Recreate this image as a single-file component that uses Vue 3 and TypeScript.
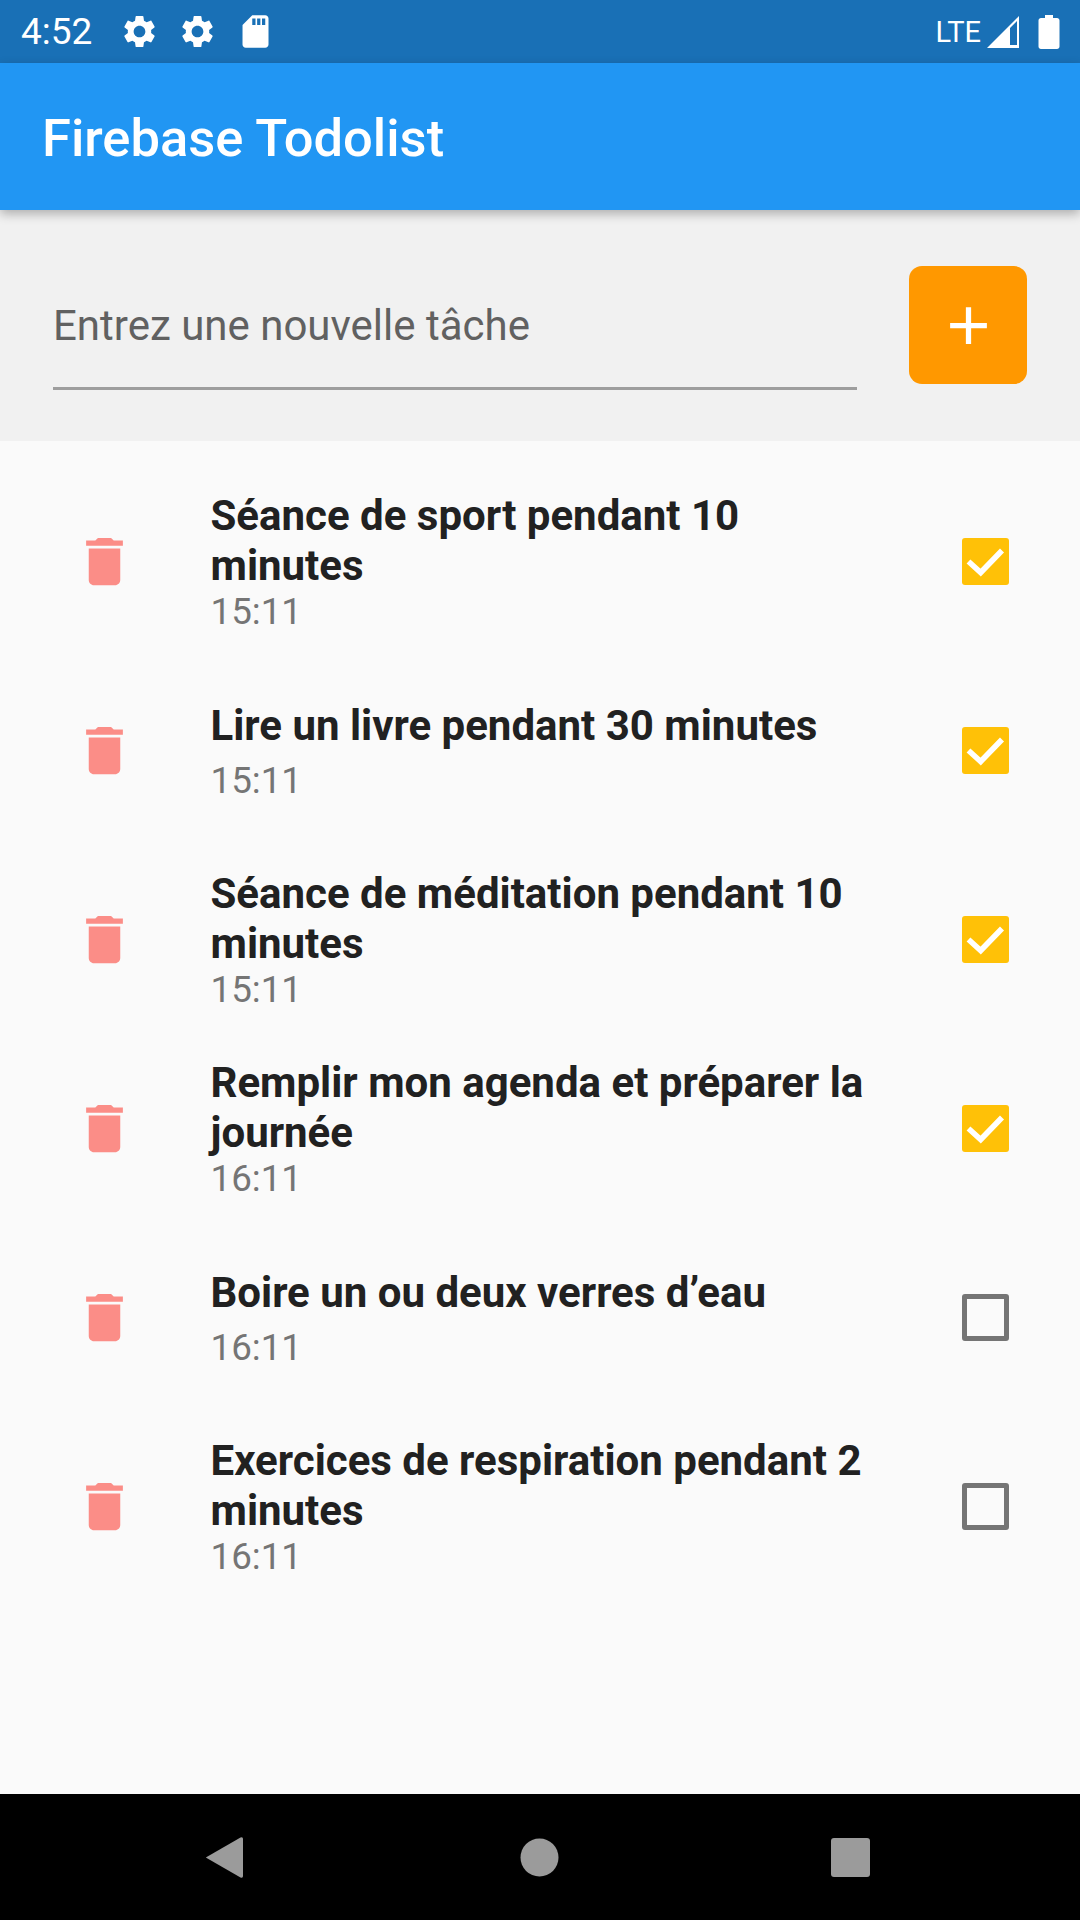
<script setup lang="ts">
interface Task { title: string; time: string; done: boolean; single?: boolean }
const tasks: Task[] = [
  { title: 'Séance de sport pendant 10 minutes', time: '15:11', done: true },
  { title: 'Lire un livre pendant 30 minutes', time: '15:11', done: true, single: true },
  { title: 'Séance de méditation pendant 10 minutes', time: '15:11', done: true },
  { title: 'Remplir mon agenda et préparer la journée', time: '16:11', done: true },
  { title: 'Boire un ou deux verres d’eau', time: '16:11', done: false, single: true },
  { title: 'Exercices de respiration pendant 2 minutes', time: '16:11', done: false },
]
const gear = 'M19.14 12.94c.04-.3.06-.61.06-.94 0-.32-.02-.64-.07-.94l2.03-1.58c.18-.14.23-.41.12-.61l-1.92-3.32c-.12-.22-.37-.29-.59-.22l-2.39.96c-.5-.38-1.03-.7-1.62-.94l-.36-2.54c-.04-.24-.24-.41-.48-.41h-3.84c-.24 0-.43.17-.47.41l-.36 2.54c-.59.24-1.13.57-1.62.94l-2.39-.96c-.22-.08-.47 0-.59.22L2.74 8.87c-.12.21-.08.47.12.61l2.03 1.58c-.05.3-.09.63-.09.94s.02.64.07.94l-2.03 1.58c-.18.14-.23.41-.12.61l1.92 3.32c.12.22.37.29.59.22l2.39-.96c.5.38 1.03.7 1.62.94l.36 2.54c.05.24.24.41.48.41h3.84c.24 0 .44-.17.47-.41l.36-2.54c.59-.24 1.13-.56 1.62-.94l2.39.96c.22.08.47 0 .59-.22l1.92-3.32c.12-.22.07-.47-.12-.61l-2.01-1.58zM12 15.6c-1.98 0-3.6-1.62-3.6-3.6s1.62-3.6 3.6-3.6 3.6 1.62 3.6 3.6-1.62 3.6-3.6 3.6z'
</script>

<template>
  <div class="screen">
    <div class="status">
      <span class="clock">4:52</span>
      <div class="status-icons">
        <svg class="s-icon" viewBox="0 0 24 24"><path :d="gear" fill="#fff" /></svg>
        <svg class="s-icon" viewBox="0 0 24 24"><path :d="gear" fill="#fff" /></svg>
        <svg class="s-icon" viewBox="0 0 24 24"><path fill="#fff" d="M18 2h-8L4.02 8 4 20c0 1.1.9 2 2 2h12c1.1 0 2-.9 2-2V4c0-1.1-.9-2-2-2zm-6 6h-2V4h2v4zm3 0h-2V4h2v4zm3 0h-2V4h2v4z" /></svg>
      </div>
      <div class="status-right">
        <span class="lte">LTE</span>
        <svg class="signal" width="34" height="34" viewBox="0 0 34 34"><path fill="#fff" fill-rule="evenodd" d="M33 1V33H1L33 1ZM24 13V30H31V6Z" /></svg>
        <svg class="battery" width="22" height="36" viewBox="0 0 22 36"><path fill="#fff" d="M7 1h8v3h4c1.4 0 2.5 1.100 2.500 2.500v26c0 1.400-1.100 2.500-2.500 2.500H3c-1.400 0-2.500-1.100-2.500-2.500v-26C.5 5.100 1.600 4 3 4h4z" /></svg>
      </div>
    </div>

    <header class="appbar">Firebase Todolist</header>

    <section class="entry">
      <div class="field">Entrez une nouvelle tâche</div>
      <div class="add">
        <svg width="63" height="63" viewBox="0 0 24 24"><path fill="#fff" d="M19 13h-6v6h-2v-6H5v-2h6V5h2v6h6v2z" /></svg>
      </div>
    </section>

    <main class="list">
      <div v-for="t in tasks" :key="t.title" class="row">
        <svg class="trash" width="63" height="63" viewBox="0 0 24 24"><path fill="#fb8d87" d="M6 19c0 1.100.9 2 2 2h8c1.100 0 2-.9 2-2V7H6v12zM19 4h-3.500l-1-1h-5l-1 1H5v2h14V4z" /></svg>
        <div class="text" :class="{ single: t.single }">
          <div class="title">{{ t.title }}</div>
          <div class="time">{{ t.time }}</div>
        </div>
        <div class="check" :class="{ on: t.done }">
          <svg v-if="t.done" width="47" height="47" viewBox="0 0 47 47"><path fill="none" stroke="#fff" stroke-width="5.600" d="M6.500 23.500L18.700 34.500L40 12.500" /></svg>
        </div>
      </div>
    </main>

    <nav class="navbar">
      <svg width="63" height="63" viewBox="0 0 63 63"><path fill="#9b9b9b" d="M12.800 31.500L47.500 11.500Q50 10.500 50 13V50Q50 52.500 47.500 51.500Z" /></svg>
      <svg width="63" height="63" viewBox="0 0 63 63"><circle cx="31.500" cy="31.500" r="19" fill="#9b9b9b" /></svg>
      <svg class="nav-recent" width="63" height="63" viewBox="0 0 63 63"><rect x="12" y="12" width="39" height="39" rx="3" fill="#9b9b9b" /></svg>
    </nav>
  </div>
</template>

<style>
html, body { margin: 0; padding: 0; }
</style>

<style scoped>
.screen {
  width: 1080px;
  height: 1920px;
  display: flex;
  flex-direction: column;
  background: #fafafa;
  font-family: Roboto, "Liberation Sans", sans-serif;
  overflow: hidden;
}
.status {
  height: 63px;
  flex: none;
  background: #1970b6;
  display: flex;
  align-items: center;
  color: #fff;
  padding: 0 20px 0 21px;
  box-sizing: border-box;
}
.clock { font-size: 37px; width: 100px; line-height: 63px; }
.status-icons { display: flex; gap: 19px; margin-left: -1px; }
.s-icon { width: 39px; height: 39px; display: block; }
.status-right { margin-left: auto; display: flex; align-items: center; }
.lte { font-size: 29px; margin-right: 5px; }
.signal { margin-right: 18px; }
.appbar {
  height: 147px;
  flex: none;
  background: #2196f3;
  color: #fff;
  font-size: 52.500px;
  font-weight: 500;
  display: flex;
  align-items: center;
  padding-left: 42px;
  padding-top: 2px;
  box-sizing: border-box;
  box-shadow: 0 4px 10px rgba(0, 0, 0, 0.28);
  position: relative;
  z-index: 1;
}
.entry {
  height: 231px;
  flex: none;
  background: #f1f1f1;
  display: flex;
  align-items: flex-start;
  padding: 56px 53px 0;
  gap: 52px;
  box-sizing: border-box;
}
.field {
  flex: 1;
  height: 124px;
  box-sizing: border-box;
  border-bottom: 3px solid #9e9e9e;
  font-size: 42px;
  color: #616161;
  line-height: 119px;
}
.add {
  width: 118px;
  height: 118px;
  background: #ff9800;
  border-radius: 13px;
  display: flex;
  align-items: center;
  justify-content: center;
}
.list { flex: 1; padding-top: 26px; }
.row {
  height: 189px;
  display: flex;
  align-items: center;
  padding-left: 73px;
}
.trash { flex: none; }
.text { width: 680px; margin-left: 74.500px; margin-right: 71.500px; flex: none; }
.title {
  font-size: 42px;
  font-weight: 700;
  line-height: 50px;
  margin-top: 1px;
  margin-bottom: -1px;
  color: #212121;
}
.text.single .title { margin-bottom: 8px; }
.time {
  font-size: 36.750px;
  line-height: 43px;
  color: #757575;
}
.check {
  flex: none;
  width: 47px;
  height: 47px;
  box-sizing: border-box;
  border: 5.250px solid #757575;
  border-radius: 3px;
}
.check.on { background: #ffc107; border: none; }
.check svg { display: block; }
.navbar {
  height: 126px;
  flex: none;
  background: #000;
  display: flex;
  align-items: center;
  justify-content: center;
  gap: 252px;
  padding-right: 5px;
}
.nav-recent { margin-left: -4px; }
</style>
